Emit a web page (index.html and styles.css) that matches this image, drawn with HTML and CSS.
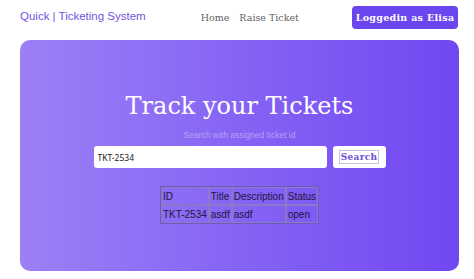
FILE: index.html
```html
<!DOCTYPE html>
<html lang="en">
<head>
    <meta charset="UTF-8">
    <meta name="viewport" content="width=device-width, initial-scale=1.0">
    <title>Quick | Ticketing System</title>
    <link rel="stylesheet" href="styles.css">
</head>
<body>
    <!-- Barra de navegación -->
    <nav class="navbar">
        <a class="brand" href="#">Quick | Ticketing System</a>
        <div class="nav-links">
            <a href="#">Home</a>
            <a href="#">Raise Ticket</a>
        </div>
        <button class="user-btn">Loggedin as Elisa</button>
    </nav>

    <!-- Sección de búsqueda -->
    <section class="hero">
        <h1>Track your Tickets</h1>
        <p class="hint">Search with assigned ticket id</p>
        <div class="search-row">
            <input type="text" class="search-input" value="TKT-2534">
            <div class="search-box"><button class="search-btn">Search</button></div>
        </div>

        <table class="results" border="1">
            <tr>
                <td>ID</td>
                <td>Title</td>
                <td>Description</td>
                <td>Status</td>
            </tr>
            <tr>
                <td>TKT-2534</td>
                <td>asdf</td>
                <td>asdf</td>
                <td>open</td>
            </tr>
        </table>
    </section>
</body>
</html>
```

FILE: styles.css
```css
body {
    margin: 0;
    padding: 0 15px 0 20px;
    background: #fff;
    font-family: 'DejaVu Serif', serif;
}
.navbar {
    display: flex;
    align-items: center;
    height: 34px;
}
.brand {
    font-family: 'Liberation Sans', Arial, sans-serif;
    font-size: 11.5px;
    color: #7352de;
    text-decoration: none;
    margin-top: -3px;
}
.nav-links {
    display: flex;
    gap: 10px;
    margin-left: 55px;
}
.nav-links a {
    font-size: 9.5px;
    color: #5f5f5f;
    text-decoration: none;
}
.user-btn {
    margin-left: auto;
    margin-right: 1px;
    background: #6b46ef;
    color: #fff;
    border: none;
    border-radius: 4px;
    font-family: 'DejaVu Serif', serif;
    font-weight: bold;
    font-size: 9.5px;
    letter-spacing: 0.3px;
    height: 23px;
    width: 106px;
    padding: 0;
}
.hero {
    margin-top: 6px;
    height: 231px;
    border-radius: 10px;
    background: linear-gradient(to right, #9c80f7, #7147f1);
    text-align: center;
    padding-top: 1px;
    box-sizing: border-box;
}
.hero h1 {
    margin: 50px 0 0;
    font-weight: normal;
    font-size: 24px;
    color: #fff;
    line-height: 30px;
}
.hint {
    margin: 9px 0 0;
    font-family: 'Liberation Sans', Arial, sans-serif;
    font-size: 8.5px;
    color: #b4a0f5;
}
.search-row {
    display: flex;
    justify-content: center;
    gap: 6px;
    margin-top: 6px;
}
.search-input {
    width: 233px;
    height: 22px;
    box-sizing: border-box;
    border: none;
    border-radius: 3px;
    padding: 0 4px;
    font-family: 'Noto Sans', sans-serif;
    font-size: 8.5px;
    color: #222;
    outline: none;
}
.search-box {
    width: 53px;
    height: 22px;
    background: #fff;
    border-radius: 3px;
    display: flex;
    align-items: center;
    justify-content: center;
}
.search-btn {
    background: #fff;
    border: 1px solid #c9c2dc;
    padding: 1px 1px;
    font-family: 'DejaVu Serif', serif;
    font-weight: bold;
    font-size: 9px;
    color: #6b4fd8;
    letter-spacing: 0.3px;
}
.results {
    margin: 18px auto 0;
    border-collapse: separate;
    border-spacing: 0;
    border: 1px solid #6e5ab8;
    font-family: 'Liberation Sans', Arial, sans-serif;
    font-size: 10px;
    color: #1e1640;
    text-align: left;
}
.results td {
    border: 1px solid #8a78c8;
    padding: 1px 1px;
    height: 14px;
}
```
